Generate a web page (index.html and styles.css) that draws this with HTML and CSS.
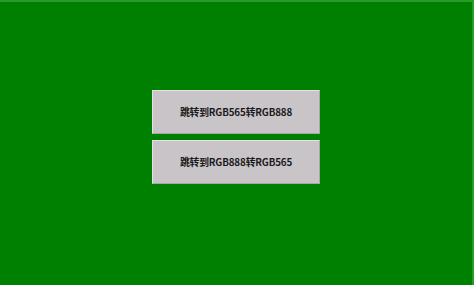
FILE: index.html
```html
<!DOCTYPE html>
<html>
<head>
<meta charset="utf-8">
<link rel="stylesheet" href="styles.css">
</head>
<body>
<div class="screen">
  <div class="buttons">
    <div class="btn">跳转到RGB565转RGB888</div>
    <div class="btn">跳转到RGB888转RGB565</div>
  </div>
</div>
</body>
</html>
```
FILE: styles.css
```css
html, body {
  margin: 0;
  padding: 0;
  width: 474px;
  height: 285px;
  overflow: hidden;
  background: #008000;
}
.screen {
  box-sizing: border-box;
  width: 474px;
  height: 285px;
  background: #008000;
  border-top: 2px solid #2a9a2a;
  border-right: 2px solid #2a9a2a;
  display: flex;
  justify-content: center;
  padding-top: 88px;
}
.buttons {
  display: flex;
  flex-direction: column;
  gap: 6px;
}
.btn {
  box-sizing: border-box;
  width: 168px;
  height: 44px;
  background: #c8c4c8;
  border-top: 1px solid #e4e2e4;
  border-left: 1px solid #e4e2e4;
  border-right: 1px solid #a8a6a8;
  border-bottom: 1px solid #a8a6a8;
  display: flex;
  align-items: center;
  justify-content: center;
  font-family: "Noto Sans CJK SC", "Noto Sans", sans-serif;
  font-size: 9.8px;
  font-weight: 600;
  color: #1a1a1a;
  letter-spacing: -0.15px;
}
```
